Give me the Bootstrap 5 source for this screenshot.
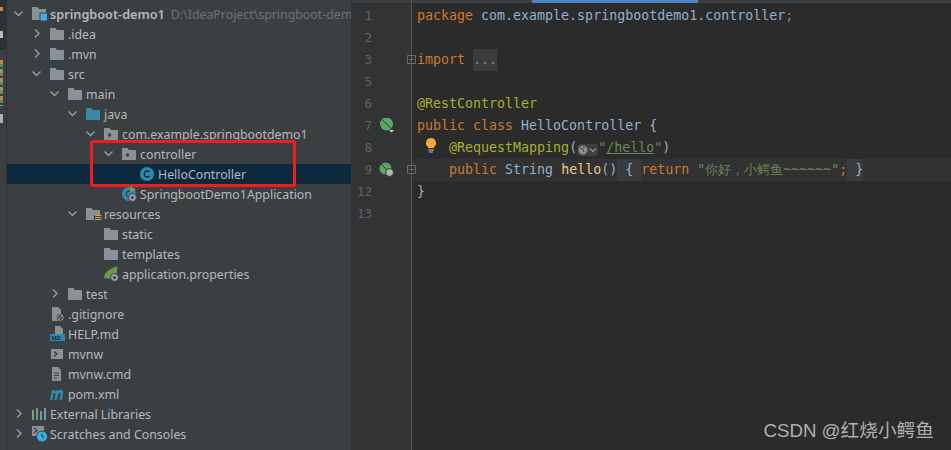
<!DOCTYPE html>
<html lang="en">
<head>
<meta charset="utf-8">
<title>IDE</title>
<link href="https://cdn.jsdelivr.net/npm/bootstrap@5.3.0/dist/css/bootstrap.min.css" rel="stylesheet">
<style>
html,body{height:450px;overflow:hidden;background:#2b2b2b}
.ide{height:450px;width:951px;overflow:hidden}
.strip{width:7px;background:#3c3f41;border-right:1px solid #323232;flex:none}
.strip-top{height:50px;background:#2f3133;padding-top:7px}
.chip-o{width:3px;height:4px;background:#c98a3c}
.chip-w{width:3px;height:7px;background:#b9bcbe;margin-top:20px}
.strip-mid{width:3px;height:46px;margin-top:10px;background:repeating-linear-gradient(#b98a4a 0 4px,#4d8a78 4px 7px,#3c3f41 7px 9px)}
.strip-low{width:3px;height:9px;margin-top:8px;background:#aeb2b5}
.tree{width:345px;flex:none;background:#3c3f41;padding-top:4px;font-family:"Noto Sans","Open Sans",sans-serif;font-size:12.35px;color:#b6b8ba;position:relative;overflow:hidden;border-right:1px solid #323232}
.trow{height:20px;white-space:nowrap;overflow:hidden;padding-top:2px}
.sel{background:#0d293e}
.d0{padding-left:7px}.d1{padding-left:25px}.d2{padding-left:43px}.d3{padding-left:61px}.d4{padding-left:79px}.d5{padding-left:97px}
.leaf-1{padding-left:43px}.leaf-3{padding-left:97px}.leaf-4{padding-left:115px}.leaf-5{padding-left:133px}
.arrow{width:18px;height:20px;flex:none;margin-top:-2px}
.ico{width:18px;height:16px;flex:none;margin-top:-2px}
.root-name{font-size:12.7px;font-weight:600}
.hint{color:#6f7275;margin-left:6px}
.red-box{position:absolute;left:83px;top:140px;width:206px;height:47px;border:3px solid #f31c1c;border-radius:3px}
.gutter{width:60px;flex:none;background:#313335;border-right:1px solid #555;font-family:"DejaVu Sans Mono",monospace;font-size:12.5px;color:#606366;padding-top:5px;position:relative}
.gline{height:22px;line-height:22px;position:relative}
.gnum{display:block;width:20px;text-align:right}
.gico{position:absolute;left:27px;top:3px}
.fold{position:absolute;left:55px;top:6px;width:9px;height:9px;z-index:2}
.editor{flex:1;background:#2b2b2b;font-family:"DejaVu Sans Mono",monospace;font-size:13.3px;color:#94b0cf;padding-top:5px;position:relative;overflow:hidden}
.cline{height:22px;line-height:22px;padding-left:5px;white-space:pre}
.caret-row{background:#323232}
.kw{color:#cc7832}.ann{color:#a8b02a}.str{color:#6a8759}.fn{color:#f2c98a}
.folded{display:inline-block;height:22px;background:#3a3b3c;color:#8b8b8b}
.folded-b{color:#94b0cf}
.link{text-decoration:underline}
.globe{display:inline-block;vertical-align:-2px;background:#3e4041;height:12px;width:21px;border-radius:3px;line-height:0}
.bulb{position:absolute;left:12px;top:138px}
.mark-wm{position:absolute;right:17px;bottom:7px;color:#b0b0b0;font-family:"Liberation Sans","Noto Sans CJK SC",sans-serif;font-size:18.7px;line-height:24px}
.top-grey{position:absolute;left:0;right:0;top:0;height:3px;background:#3c3f41}
.top-tab{position:absolute;left:120px;width:166px;top:0;height:3px;background:#4b86c4}
</style>
</head>
<body>
<div class="ide d-flex">
  <div class="strip"><div class="strip-top"><div class="chip-o"></div><div class="chip-w"></div></div><div class="strip-mid"></div><div class="strip-low"></div></div>
  <div class="tree">
    <svg width="0" height="0" class="d-block">
      <defs>
        <path id="ar" d="M.5 7.500l4 4 4-4" fill="none" stroke="#9a9da0" stroke-width="1.400"/>
        <path id="ac" d="M3 5.500l4 4-4 4" fill="none" stroke="#9a9da0" stroke-width="1.400"/>
        <path id="fo" d="M0 2h5.500l1.500 2h7v10H0z" fill="#8a9299"/>
        <path id="fb" d="M0 2h5.500l1.500 2h7v10H0z" fill="#3d87a6"/>
        <g id="pk"><use href="#fo"/><circle cx="5.500" cy="9" r="1.700" fill="#3c3f41"/></g>
      </defs>
    </svg>
    <div class="trow d-flex align-items-center d0"><svg class="arrow" viewBox="0 0 18 20"><use href="#ar"/></svg><svg class="ico" viewBox="0 0 18 16"><path d="M0 1h5.500l1.500 2h7v11H0z" fill="#8a9299"/><rect x="8" y="7" width="7.500" height="8" fill="#3bb0e8" stroke="#3c3f41"/></svg><span class="root-name">springboot-demo1</span><span class="hint">D:\IdeaProject\springboot-demo1</span></div>
    <div class="trow d-flex align-items-center d1"><svg class="arrow" viewBox="0 0 18 20"><use href="#ac"/></svg><svg class="ico" viewBox="0 0 18 16"><use href="#fo"/></svg>.idea</div>
    <div class="trow d-flex align-items-center d1"><svg class="arrow" viewBox="0 0 18 20"><use href="#ac"/></svg><svg class="ico" viewBox="0 0 18 16"><use href="#fo"/></svg>.mvn</div>
    <div class="trow d-flex align-items-center d1"><svg class="arrow" viewBox="0 0 18 20"><use href="#ar"/></svg><svg class="ico" viewBox="0 0 18 16"><use href="#fo"/></svg>src</div>
    <div class="trow d-flex align-items-center d2"><svg class="arrow" viewBox="0 0 18 20"><use href="#ar"/></svg><svg class="ico" viewBox="0 0 18 16"><use href="#fo"/></svg>main</div>
    <div class="trow d-flex align-items-center d3"><svg class="arrow" viewBox="0 0 18 20"><use href="#ar"/></svg><svg class="ico" viewBox="0 0 18 16"><use href="#fb"/></svg>java</div>
    <div class="trow d-flex align-items-center d4"><svg class="arrow" viewBox="0 0 18 20"><use href="#ar"/></svg><svg class="ico" viewBox="0 0 18 16"><use href="#pk"/></svg>com.example.springbootdemo1</div>
    <div class="trow d-flex align-items-center d5"><svg class="arrow" viewBox="0 0 18 20"><use href="#ar"/></svg><svg class="ico" viewBox="0 0 18 16"><use href="#pk"/></svg>controller</div>
    <div class="trow d-flex align-items-center sel leaf-5"><svg class="ico" viewBox="0 0 18 16"><circle cx="7" cy="8" r="7" fill="#2f8aad"/><path d="M9.500 6a3 3 0 1 0 0 4" fill="none" stroke="#0d293e" stroke-width="1.300"/></svg>HelloController</div>
    <div class="trow d-flex align-items-center leaf-4"><svg class="ico" viewBox="0 0 18 16"><circle cx="7" cy="8" r="7" fill="#2f8aad"/><path d="M9.500 6a3 3 0 1 0 0 4" fill="none" stroke="#3c3f41" stroke-width="1.300"/><path d="M8 0l6 3.500L8 7z" fill="#59a869"/><circle cx="10.500" cy="11.500" r="4" fill="#9aa1a6" stroke="#3c3f41"/><circle cx="10.500" cy="11.500" r="1.500" fill="#3c3f41"/></svg>SpringbootDemo1Application</div>
    <div class="trow d-flex align-items-center d3"><svg class="arrow" viewBox="0 0 18 20"><use href="#ar"/></svg><svg class="ico" viewBox="0 0 18 16"><path d="M0 2h5.500l1.500 2h7v5H8v5H0z" fill="#8a9299"/><path d="M9 9.500h6.500M9 11.500h6.500M9 13.500h6.500" stroke="#d9a343" stroke-width="1"/></svg>resources</div>
    <div class="trow d-flex align-items-center leaf-3"><svg class="ico" viewBox="0 0 18 16"><use href="#fo"/></svg>static</div>
    <div class="trow d-flex align-items-center leaf-3"><svg class="ico" viewBox="0 0 18 16"><use href="#fo"/></svg>templates</div>
    <div class="trow d-flex align-items-center leaf-3"><svg class="ico" viewBox="0 0 18 16"><path d="M0 12C0 6 6 3 13 0c1 6-1 11-5 13z" fill="#6a9a45"/><circle cx="10.500" cy="11.500" r="4" fill="#9aa1a6" stroke="#3c3f41"/><circle cx="10.500" cy="11.500" r="1.500" fill="#3c3f41"/></svg>application.properties</div>
    <div class="trow d-flex align-items-center d2"><svg class="arrow" viewBox="0 0 18 20"><use href="#ac"/></svg><svg class="ico" viewBox="0 0 18 16"><use href="#fo"/></svg>test</div>
    <div class="trow d-flex align-items-center leaf-1"><svg class="ico" viewBox="0 0 18 16"><path d="M2 1h6l3 3v11H2z" fill="#8a9299"/><circle cx="10.500" cy="11.500" r="3.800" fill="#3c3f41"/><circle cx="10.500" cy="11.500" r="2.800" fill="none" stroke="#9aa1a6"/><path d="M8.500 13.500l4-4" stroke="#9aa1a6"/></svg>.gitignore</div>
    <div class="trow d-flex align-items-center leaf-1"><svg class="ico" viewBox="0 0 18 16"><path d="M5 0h5l3 3v6H5z" fill="#8a9299"/><rect x="0" y="8" width="15" height="7" fill="#2f8aad"/><text x="1.500" y="14" font-size="6" font-family="Liberation Sans" font-weight="700" fill="#1d2a33">MD</text></svg>HELP.md</div>
    <div class="trow d-flex align-items-center leaf-1"><svg class="ico" viewBox="0 0 18 16"><rect x="1" y="3" width="12" height="10" fill="#8a9299"/><path d="M4 5.500l3 2.500-3 2.500" fill="none" stroke="#3c3f41" stroke-width="1.500"/></svg>mvnw</div>
    <div class="trow d-flex align-items-center leaf-1"><svg class="ico" viewBox="0 0 18 16"><path d="M2 1h6l3 3v11H2z" fill="#8a9299"/><path d="M4 7h5M4 9.500h5M4 12h3" stroke="#3c3f41"/></svg>mvnw.cmd</div>
    <div class="trow d-flex align-items-center leaf-1"><svg class="ico" viewBox="0 0 18 16"><path d="M0 14l2-10h2.500l-.3 1.500C5 4.300 7 3.500 8 5c1.200-1.200 4-2 5 0 .5 1 .2 2-.1 3.500L12 14H9.500l1-5.500c.3-1.500-1.500-1.800-2.300-.5L7 14H4.500l1.100-6c.2-1.300-1.500-1.300-2.100-.2L2.500 14z" fill="#2f8aad"/></svg>pom.xml</div>
    <div class="trow d-flex align-items-center d0"><svg class="arrow" viewBox="0 0 18 20"><use href="#ac"/></svg><svg class="ico" viewBox="0 0 18 16"><path d="M0 4h2v10H0zM8 5h2v9H8z" fill="#8a9299"/><path d="M4 2h2v12H4z" fill="#59a869"/><path d="M12 2h2v12h-2z" fill="#6b9db8"/></svg>External Libraries</div>
    <div class="trow d-flex align-items-center d0"><svg class="arrow" viewBox="0 0 18 20"><use href="#ac"/></svg><svg class="ico" viewBox="0 0 18 16"><path d="M0 0h12v10H0z" fill="#8a9299"/><path d="M2 2l3 2.500L2 7" fill="none" stroke="#3c3f41" stroke-width="1.200"/><circle cx="10" cy="10.500" r="5.500" fill="#3bb0e8" stroke="#3c3f41"/><path d="M10 7.500v3l2 1" fill="none" stroke="#1d2a33"/></svg>Scratches and Consoles</div>
    <div class="red-box"></div>
  </div>
  <div class="gutter">
    <div class="top-grey"></div>
    <div class="gline"><span class="gnum">1</span></div>
    <div class="gline"><span class="gnum">2</span></div>
    <div class="gline"><span class="gnum">3</span><svg class="fold" viewBox="0 0 9 9"><path d="M.5.500h8v8h-8zM2 4.500h5M4.500 2v5" fill="none" stroke="#6a6d70"/></svg></div>
    <div class="gline"><span class="gnum">5</span></div>
    <div class="gline"><span class="gnum">6</span></div>
    <div class="gline"><span class="gnum">7</span><svg class="gico" width="16" height="16" viewBox="0 0 16 16"><circle cx="7.500" cy="6" r="6.500" fill="#59a869"/><path d="M3 1.500L12 10.500" stroke="#2b3a2b" stroke-width="1"/><path d="M10 12h5l-2.500 2.500z" fill="#cfcfcf"/></svg></div>
    <div class="gline"><span class="gnum">8</span></div>
    <div class="gline"><span class="gnum">9</span><svg class="gico" width="16" height="16" viewBox="0 0 16 16"><circle cx="6.500" cy="6.500" r="6" fill="#59a869"/><path d="M2 2L11 11" stroke="#2b3a2b"/><circle cx="10.500" cy="10.500" r="4" fill="#aeb3b6" stroke="#313335"/></svg><svg class="fold" viewBox="0 0 9 9"><path d="M.5.500h8v8h-8zM2 4.500h5" fill="none" stroke="#6a6d70"/></svg></div>
    <div class="gline"><span class="gnum">12</span></div>
    <div class="gline"><span class="gnum">13</span></div>
  </div>
  <div class="editor">
    <div class="top-grey"></div>
    <div class="top-tab"></div>
    <div class="cline"><span class="kw">package</span> com.example.springbootdemo1.controller<span class="kw">;</span></div>
    <div class="cline"> </div>
    <div class="cline"><span class="kw">import</span> <span class="folded">...</span></div>
    <div class="cline"> </div>
    <div class="cline"><span class="ann">@RestController</span></div>
    <div class="cline"><span class="kw">public class</span> HelloController {</div>
    <div class="cline">    <span class="ann">@RequestMapping</span>(<span class="globe"><svg width="21" height="12" viewBox="0 0 21 12"><circle cx="6" cy="6" r="4.500" fill="#8b8f92"/><path d="M3 4l3 1 1 3M7 2v2" stroke="#3e4041" fill="none"/><path d="M13 4.500l3 3 3-3" fill="none" stroke="#8b8f92" stroke-width="1.300"/></svg></span><span class="str">"<span class="link">/hello</span>"</span>)</div>
    <div class="cline caret-row">    <span class="kw">public</span> String <span class="fn">hello</span>()<span class="folded folded-b"> { </span><span class="kw">return</span> <span class="str">"你好，小鳄鱼~~~~~~"</span><span class="kw">;</span><span class="folded folded-b"> }</span></div>
    <div class="cline">}</div>
    <div class="cline"> </div>
    <svg class="bulb" width="14" height="17" viewBox="0 0 14 17"><path d="M7 0a5 5 0 0 1 3 9v1H4V9a5 5 0 0 1 3-9z" fill="#f2a93b"/><path d="M4 12h6M5 14h4" stroke="#bdbdbd"/></svg>
    <div class="mark-wm">CSDN @红烧小鳄鱼</div>
  </div>
</div>
<script src="https://cdn.jsdelivr.net/npm/bootstrap@5.3.0/dist/js/bootstrap.bundle.min.js"></script>
</body>
</html>
